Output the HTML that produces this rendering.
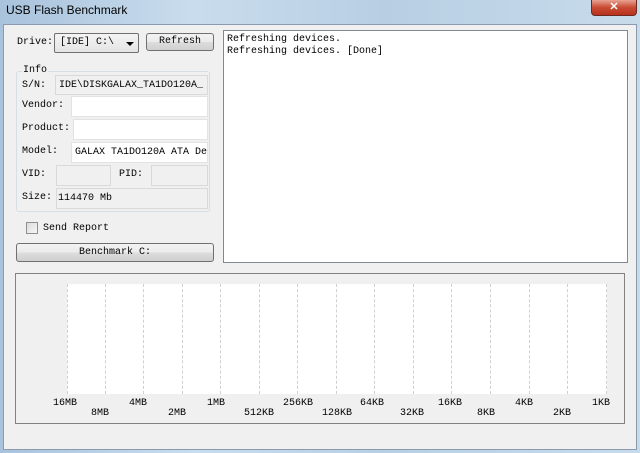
<!DOCTYPE html>
<html><head><style>
*{margin:0;padding:0;box-sizing:border-box}
body{width:640px;height:453px;overflow:hidden;background:linear-gradient(90deg,#a9c3dc,#c9dced 30%,#b8cfe3 60%,#c7dbeb);position:relative;font-family:"Liberation Mono",monospace;font-size:10px;color:#000}
.a{position:absolute}
.title{left:6px;top:3px;font-family:"Liberation Sans",sans-serif;font-size:12px;color:#000}
.close{left:591px;top:0;width:46px;height:16px;background:linear-gradient(#e9a293,#c84a33 50%,#b8321c);border:1px solid #6b2a20;border-top:none;border-radius:0 0 4px 4px;color:#fff;font:bold 11px "Liberation Sans",sans-serif;text-align:center;line-height:14px}
.client{left:3px;top:24px;width:634px;height:426px;background:#f0f0f0;border:1px solid #8a9bb0}
.box{background:#fff;border:1px solid #abadb3}
.dis{background:#f0f0f0;border:1px solid #d9d9d9}
.btn{border:1px solid #707070;border-radius:3px;background:linear-gradient(#f2f2f2,#ebebeb 50%,#dddddd 51%,#cfcfcf);text-align:center}
.t{white-space:pre;line-height:12px}
.vl{top:284px;height:110px;border-left:1px dashed #d0d0d0;width:0}
</style></head><body>
<div class="a title">USB Flash Benchmark</div>
<div class="a close">✕</div>
<div class="a client"></div>
<div class="a t" style="left:17px;top:37px">Drive:</div>
<div class="a box" style="left:54px;top:33px;width:85px;height:20px;background:linear-gradient(#f4f4f4,#e4e4e4);border-color:#707070;border-radius:2px"></div>
<div class="a t" style="left:60px;top:37px">[IDE] C:\</div>
<div class="a" style="left:126px;top:42px;border:4px solid transparent;border-top:4px solid #000"></div>
<div class="a btn t" style="left:146px;top:33px;width:68px;height:18px;line-height:16px">Refresh</div>
<div class="a box" style="left:223px;top:30px;width:405px;height:233px;border-color:#828790"></div>
<div class="a t" style="left:227px;top:34px">Refreshing devices.
Refreshing devices. [Done]</div>
<div class="a" style="left:16px;top:71px;width:194px;height:141px;border:1px solid #d5dfe5;border-radius:3px"></div>
<div class="a t" style="left:22px;top:65px;background:#f0f0f0;padding:0 1px">Info</div>
<div class="a t" style="left:22px;top:80px">S/N:</div>
<div class="a dis t" style="left:55px;top:75px;width:153px;height:20px;padding:4px 0 0 3px">IDE\DISKGALAX_TA1DO120A_</div>
<div class="a t" style="left:22px;top:100px">Vendor:</div>
<div class="a box" style="left:71px;top:96px;width:137px;height:21px;border-color:#e3e3e3"></div>
<div class="a t" style="left:22px;top:123px">Product:</div>
<div class="a box" style="left:73px;top:119px;width:135px;height:21px;border-color:#e3e3e3"></div>
<div class="a t" style="left:22px;top:146px">Model:</div>
<div class="a box t" style="left:71px;top:142px;width:137px;height:21px;border-color:#e3e3e3;padding:4px 0 0 3px;overflow:hidden">GALAX TA1DO120A ATA De</div>
<div class="a t" style="left:22px;top:169px">VID:</div>
<div class="a dis" style="left:56px;top:165px;width:55px;height:21px"></div>
<div class="a t" style="left:119px;top:169px">PID:</div>
<div class="a dis" style="left:151px;top:165px;width:57px;height:21px"></div>
<div class="a t" style="left:22px;top:192px">Size:</div>
<div class="a dis t" style="left:56px;top:188px;width:152px;height:21px;padding:4px 0 0 1px">114470 Mb</div>
<div class="a" style="left:26px;top:222px;width:12px;height:12px;border:1px solid #8f8f8f;background:linear-gradient(135deg,#dcdcdc,#f6f6f6)"></div>
<div class="a t" style="left:43px;top:223px">Send Report</div>
<div class="a btn t" style="left:16px;top:243px;width:198px;height:19px;line-height:17px">Benchmark C:</div>
<div class="a" style="left:15px;top:273px;width:610px;height:151px;border:1px solid #828282"></div>
<div class="a" style="left:67px;top:284px;width:540px;height:110px;background:#fff"></div>
<div class="a vl" style="left:67px"></div><div class="a vl" style="left:105px"></div><div class="a vl" style="left:143px"></div><div class="a vl" style="left:182px"></div><div class="a vl" style="left:220px"></div><div class="a vl" style="left:259px"></div><div class="a vl" style="left:297px"></div><div class="a vl" style="left:336px"></div><div class="a vl" style="left:374px"></div><div class="a vl" style="left:413px"></div><div class="a vl" style="left:451px"></div><div class="a vl" style="left:490px"></div><div class="a vl" style="left:529px"></div><div class="a vl" style="left:567px"></div><div class="a vl" style="left:606px"></div>
<div class="a t" style="left:53px;top:398px">16MB</div>
<div class="a t" style="left:129px;top:398px">4MB</div>
<div class="a t" style="left:207px;top:398px">1MB</div>
<div class="a t" style="left:283px;top:398px">256KB</div>
<div class="a t" style="left:360px;top:398px">64KB</div>
<div class="a t" style="left:438px;top:398px">16KB</div>
<div class="a t" style="left:515px;top:398px">4KB</div>
<div class="a t" style="left:592px;top:398px">1KB</div>
<div class="a t" style="left:91px;top:408px">8MB</div>
<div class="a t" style="left:168px;top:408px">2MB</div>
<div class="a t" style="left:244px;top:408px">512KB</div>
<div class="a t" style="left:322px;top:408px">128KB</div>
<div class="a t" style="left:400px;top:408px">32KB</div>
<div class="a t" style="left:477px;top:408px">8KB</div>
<div class="a t" style="left:553px;top:408px">2KB</div>
</body></html>
